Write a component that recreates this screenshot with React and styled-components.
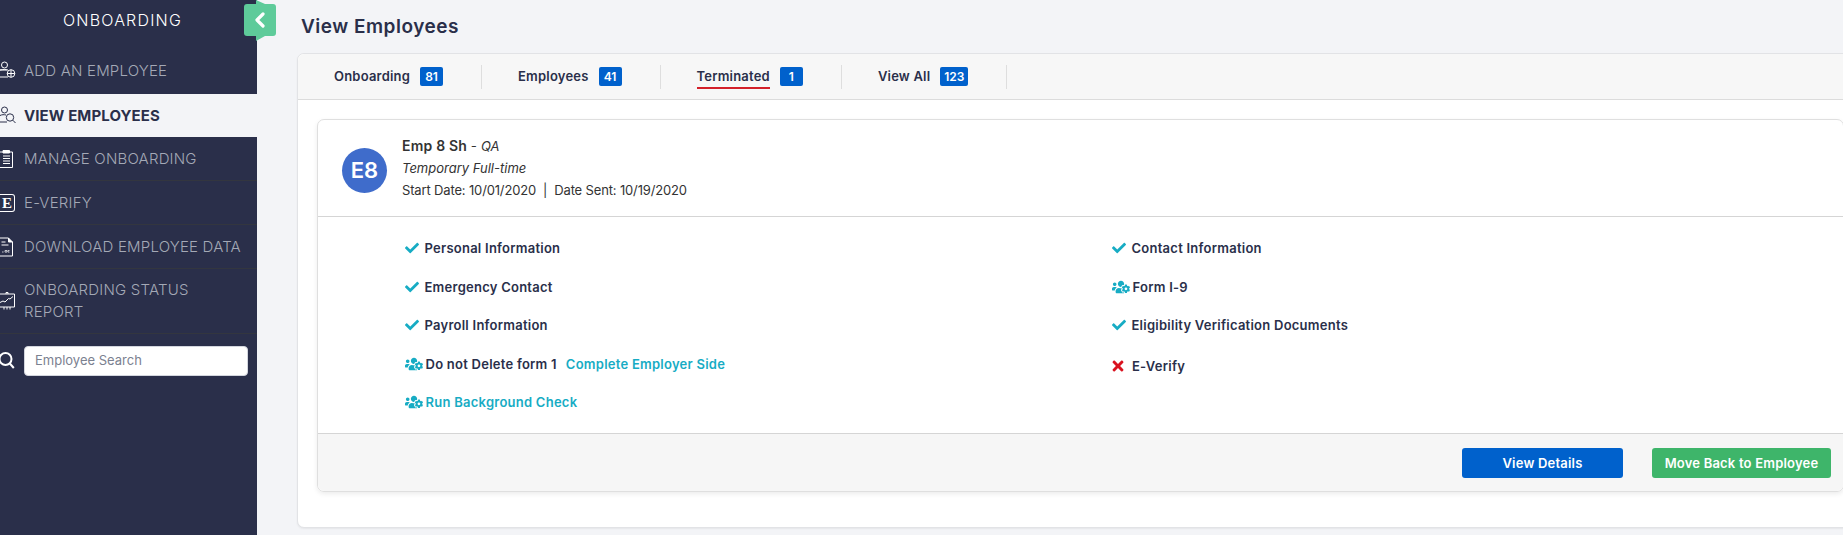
import React from 'react';
import styled, { createGlobalStyle } from 'styled-components';
import { FaCheck, FaTimes, FaUsersCog } from 'react-icons/fa';

const fontStack = 'Inter, "Open Sans", "Liberation Sans", sans-serif';
const navy = '#2a2f4a';
const teal = '#17acc4';

const GlobalStyle = createGlobalStyle`
  html, body {
    margin: 0;
    padding: 0;
    background: #f3f4f7;
    font-family: ${fontStack};
  }
`;

const Page = styled.div`
  display: flex;
  width: 1843px;
  height: 535px;
  overflow: hidden;
  background: #f3f4f7;
`;

const Sidebar = styled.aside`
  position: relative;
  flex: 0 0 257px;
  background: ${navy};
`;

const SideTitle = styled.div`
  height: 47px;
  padding: 10px 12px 0 0;
  box-sizing: border-box;
  text-align: center;
  color: #fff;
  font-size: 16px;
  line-height: 20px;
  font-weight: 300;
  letter-spacing: 1.2px;
`;

const Toggle = styled.button`
  position: absolute;
  top: 4px;
  left: 244px;
  width: 32px;
  height: 32px;
  padding: 0;
  border: 0;
  border-radius: 3px;
  background: #5ecb9a;
  display: flex;
  align-items: center;
  justify-content: center;

  &::before,
  &::after {
    content: '';
    position: absolute;
    left: 12px;
    border-left: 0 solid transparent;
    border-right: 9px solid transparent;
  }
  &::before {
    top: -4px;
    border-bottom: 4px solid #5ecb9a;
  }
  &::after {
    bottom: -5px;
    border-top: 5px solid #5ecb9a;
  }
`;

const NavItem = styled.a`
  display: flex;
  align-items: center;
  height: ${p => p.$height}px;
  box-sizing: border-box;
  border-bottom: ${p => (p.$divided ? '1px solid #33363f' : '0')};
  background: ${p => (p.$active ? '#f3f4f7' : 'transparent')};
  color: ${p => (p.$active ? navy : '#a4a9b6')};
  font-size: 15px;
  line-height: 22px;
  font-weight: ${p => (p.$active ? 700 : 300)};
  letter-spacing: ${p => (p.$active ? '0.1px' : '0.2px')};
`;

const NavIcon = styled.span`
  flex: 0 0 24px;
  display: flex;
  align-items: center;
  color: ${p => (p.$active ? navy : '#fff')};
`;

const LetterIcon = styled.span`
  display: block;
  width: 15px;
  height: 18px;
  box-sizing: border-box;
  border: 1px solid #fff;
  border-left: 0;
  border-radius: 0 3px 3px 0;
  color: #fff;
  font-family: "Liberation Serif", serif;
  font-size: 15px;
  line-height: 16px;
  font-weight: 700;
  letter-spacing: 0;
  text-align: center;
`;

const SearchRow = styled.div`
  display: flex;
  align-items: center;
  margin-top: 12px;
`;

const SearchInput = styled.input`
  width: 224px;
  height: 30px;
  box-sizing: border-box;
  padding: 0 10px 2px;
  border: 1px solid #d3d6de;
  border-radius: 4px;
  background: #fff;
  font-family: ${fontStack};
  font-size: 13px;
  color: #6f7686;

  &::placeholder {
    color: #7b8190;
    opacity: 1;
  }
`;

const Main = styled.main`
  flex: 1;
  min-width: 0;
  padding: 0 0 7px 40px;
`;

const Heading = styled.h1`
  margin: 0;
  height: 53px;
  padding: 16px 0 0 4px;
  box-sizing: border-box;
  color: ${navy};
  font-size: 19px;
  line-height: 22px;
  font-weight: 600;
  letter-spacing: 0.5px;
`;

const Panel = styled.section`
  width: 1600px;
  height: 475px;
  box-sizing: border-box;
  border: 1px solid #e2e3e6;
  border-radius: 7px;
  background: #fff;
  box-shadow: 0 1px 2px rgba(0, 0, 0, 0.06);
`;

const TabBar = styled.div`
  display: flex;
  align-items: center;
  height: 46px;
  box-sizing: border-box;
  border-bottom: 1px solid #dcdcdc;
  border-radius: 7px 7px 0 0;
  background: #f7f7f7;
`;

const Tab = styled.div`
  display: flex;
  align-items: center;
  gap: 10px;
  height: 24px;
  padding: 0 38px 0 36px;
  border-right: 1px solid #dedede;
`;

const TabLabel = styled.span`
  height: 24px;
  box-sizing: border-box;
  border-bottom: ${p => (p.$active ? '2px solid #d3202a' : '0')};
  color: ${navy};
  font-size: 13px;
  line-height: 22px;
  font-weight: 600;
  letter-spacing: 0.2px;
`;

const Count = styled.span`
  min-width: 23px;
  height: 19px;
  padding: 0 4px;
  box-sizing: border-box;
  border-radius: 2px;
  background: #0061cc;
  color: #fff;
  font-size: 12px;
  line-height: 19px;
  font-weight: 600;
  text-align: center;
`;

const Card = styled.article`
  width: 1527px;
  margin: 19px 0 0 19px;
  box-sizing: border-box;
  border: 1px solid #dfdfdf;
  border-radius: 7px;
  box-shadow: 0 2px 5px rgba(0, 0, 0, 0.08);
`;

const CardHead = styled.header`
  display: flex;
  align-items: center;
  gap: 15px;
  height: 97px;
  padding-left: 24px;
  box-sizing: border-box;
  border-bottom: 1px solid #d5d5d5;
`;

const Avatar = styled.div`
  flex: 0 0 45px;
  height: 45px;
  margin-top: 5px;
  border-radius: 50%;
  background: #3f6ccb;
  color: #fff;
  font-size: 22px;
  line-height: 45px;
  font-weight: 600;
  text-align: center;
`;

const Info = styled.div`
  color: #333;
  font-size: 13px;
  line-height: 22px;
`;

const Name = styled.div`
  font-size: 14px;
  font-weight: 600;
  letter-spacing: 0.2px;
`;

const Role = styled.em`
  font-size: 13px;
  font-weight: 400;
`;

const Kind = styled.div`
  font-style: italic;
`;

const Dates = styled.div`
  letter-spacing: -0.15px;
`;

const Checklist = styled.div`
  display: grid;
  grid-template-columns: 707px 1fr;
  grid-auto-rows: 38.5px;
  height: 216px;
  padding: 12px 0 0 87px;
  box-sizing: border-box;
`;

const Check = styled.div`
  display: flex;
  align-items: center;
  height: 38.5px;
  padding-top: ${p => p.$drop || 0}px;
  box-sizing: border-box;
  color: ${navy};
  font-size: 13px;
  font-weight: 600;
  letter-spacing: 0.25px;
`;

const CheckIcon = styled.span`
  flex: 0 0 ${p => p.$width}px;
  display: flex;
  align-items: center;
  margin-left: ${p => p.$shift || 0}px;
  color: ${p => p.$color};
  font-size: ${p => p.$size}px;
`;

const ActionLink = styled.a`
  margin-left: ${p => p.$gap || 0}px;
  color: ${teal};
`;

const CardFoot = styled.footer`
  display: flex;
  justify-content: flex-end;
  align-items: center;
  gap: 29px;
  height: 58px;
  padding-right: 12px;
  box-sizing: border-box;
  border-top: 1px solid #d5d5d5;
  border-radius: 0 0 7px 7px;
  background: #f6f6f6;
`;

const Button = styled.button`
  height: 30px;
  width: ${p => p.$width}px;
  padding: 0;
  border: 0;
  border-radius: 3px;
  background: ${p => p.$color};
  color: #fff;
  font-family: ${fontStack};
  font-size: 13px;
  font-weight: 600;
  letter-spacing: 0.2px;
`;

const AddIcon = () => (
  <svg width="16" height="20" viewBox="0 0 16 20" fill="none" stroke="currentColor" strokeWidth="1">
    <circle cx="4.5" cy="4" r="3" />
    <path d="M0 9h7M0 16h8" />
    <path d="M8 9c-2-.6-5-.6-8 0" />
    <circle cx="11" cy="12.5" r="3.8" />
    <path d="M7.2 12.5h7.6M11 8.7v7.6" />
  </svg>
);

const ViewIcon = () => (
  <svg width="16" height="20" viewBox="0 0 16 20" fill="none" stroke="currentColor" strokeWidth="1">
    <circle cx="4.5" cy="4" r="3" />
    <path d="M0 9.5c2-1 4-1 6-.5M0 16h7" />
    <circle cx="10" cy="11.5" r="3.7" />
    <path d="M12.8 14.2L15.5 17" />
  </svg>
);

const ClipboardIcon = () => (
  <svg width="16" height="20" viewBox="0 0 16 20" fill="none" stroke="currentColor" strokeWidth="1">
    <path d="M0 3h12.5v15.5H0" />
    <path d="M3 1.5h6.5V4H3z" fill="currentColor" />
    <path d="M3 7h7M3 9.5h7M3 12h7M3 14.5h7" />
  </svg>
);

const LogIcon = () => (
  <svg width="16" height="20" viewBox="0 0 16 20" fill="none" stroke="currentColor" strokeWidth="1">
    <path d="M0 1h8.5L12.5 5v14H0" />
    <path d="M8.5 1v4h4" fill="currentColor" />
    <path d="M1.5 5h4M1.5 8h7" />
    <path d="M2 15h1.6M5 13.5h2v1.6H5zM9.5 13.5H8v1.6h1.5" strokeWidth="0.7" />
  </svg>
);

const BoardIcon = () => (
  <svg width="16" height="20" viewBox="0 0 16 20" fill="none" stroke="currentColor" strokeWidth="1">
    <path d="M0 3h14.5v13H0" />
    <path d="M6 3V1.5h2V3" />
    <path d="M0 11.5l3-1.5 2 1 3.5-3.5L10 8l3-2.5" />
    <path d="M4 16v2.5M7 16v2.5M10 16v2.5" />
  </svg>
);

const SearchIcon = () => (
  <svg width="16" height="18" viewBox="0 0 16 18" fill="none" stroke="#fff" strokeWidth="2">
    <circle cx="5.5" cy="7" r="6" />
    <path d="M9.8 11.5l4 4.5" />
  </svg>
);

const Chevron = () => (
  <svg width="12" height="16" viewBox="0 0 12 16" fill="none" stroke="#fff" strokeWidth="3.2" strokeLinecap="round" strokeLinejoin="round">
    <path d="M9 2L3 8l6 6" />
  </svg>
);

const navItems = [
  { label: 'ADD AN EMPLOYEE', icon: <AddIcon />, height: 47 },
  { label: 'VIEW EMPLOYEES', icon: <ViewIcon />, height: 43, active: true },
  { label: 'MANAGE ONBOARDING', icon: <ClipboardIcon />, height: 44, divided: true },
  { label: 'E-VERIFY', icon: <LetterIcon>E</LetterIcon>, height: 44, divided: true },
  { label: 'DOWNLOAD EMPLOYEE DATA', icon: <LogIcon />, height: 44, divided: true },
  { label: <>ONBOARDING STATUS<br />REPORT</>, icon: <BoardIcon />, height: 65, divided: true },
];

const done = { icon: <FaCheck />, width: 19.5, color: teal, size: 14 };
const team = { icon: <FaUsersCog />, width: 20.5, color: teal, size: 18 };
const failed = { icon: <FaTimes />, width: 22, shift: -2, color: '#d9121f', size: 16 };

const tabs = [
  { label: 'Onboarding', count: 81 },
  { label: 'Employees', count: 41 },
  { label: 'Terminated', count: 1, active: true },
  { label: 'View All', count: 123 },
];

const StatusIcon = ({ kind }) => (
  <CheckIcon $width={kind.width} $shift={kind.shift} $color={kind.color} $size={kind.size}>
    {kind.icon}
  </CheckIcon>
);

const App = () => (
  <Page>
    <GlobalStyle />
    <Sidebar>
      <SideTitle>ONBOARDING</SideTitle>
      <Toggle aria-label="Collapse menu">
        <Chevron />
      </Toggle>
      {navItems.map((item, i) => (
        <NavItem key={i} $height={item.height} $active={item.active} $divided={item.divided}>
          <NavIcon $active={item.active}>{item.icon}</NavIcon>
          <span>{item.label}</span>
        </NavItem>
      ))}
      <SearchRow>
        <NavIcon>
          <SearchIcon />
        </NavIcon>
        <SearchInput placeholder="Employee Search" />
      </SearchRow>
    </Sidebar>
    <Main>
      <Heading>View Employees</Heading>
      <Panel>
        <TabBar>
          {tabs.map(tab => (
            <Tab key={tab.label}>
              <TabLabel $active={tab.active}>{tab.label}</TabLabel>
              <Count>{tab.count}</Count>
            </Tab>
          ))}
        </TabBar>
        <Card>
          <CardHead>
            <Avatar>E8</Avatar>
            <Info>
              <Name>
                Emp 8 Sh <Role>- QA</Role>
              </Name>
              <Kind>Temporary Full-time</Kind>
              <Dates>Start Date: 10/01/2020 &nbsp;|&nbsp; Date Sent: 10/19/2020</Dates>
            </Info>
          </CardHead>
          <Checklist>
            <Check><StatusIcon kind={done} />Personal Information</Check>
            <Check><StatusIcon kind={done} />Contact Information</Check>
            <Check><StatusIcon kind={done} />Emergency Contact</Check>
            <Check><StatusIcon kind={team} />Form I-9</Check>
            <Check><StatusIcon kind={done} />Payroll Information</Check>
            <Check><StatusIcon kind={done} />Eligibility Verification Documents</Check>
            <Check>
              <StatusIcon kind={team} />Do not Delete form 1
              <ActionLink $gap={9}>Complete Employer Side</ActionLink>
            </Check>
            <Check $drop={4}><StatusIcon kind={failed} />E-Verify</Check>
            <Check><StatusIcon kind={team} /><ActionLink>Run Background Check</ActionLink></Check>
          </Checklist>
          <CardFoot>
            <Button $width={161} $color="#0061cc">View Details</Button>
            <Button $width={179} $color="#3eb56a">Move Back to Employee</Button>
          </CardFoot>
        </Card>
      </Panel>
    </Main>
  </Page>
);

export default App;
